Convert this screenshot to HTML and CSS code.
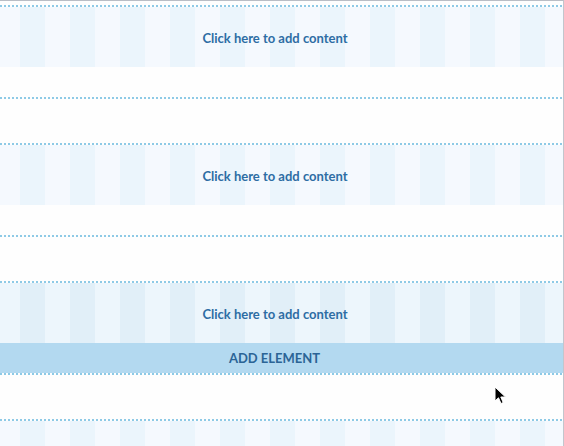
FILE: index.html
```html
<!DOCTYPE html>
<html>
<head>
<meta charset="utf-8">
<link rel="stylesheet" href="styles.css">
</head>
<body>
<div class="page">
  <div class="lead"></div>
  <div class="element">
    <div class="content"><span class="label">Click here to add content</span></div>
    <div class="foot"></div>
  </div>
  <div class="spacer"></div>
  <div class="element">
    <div class="content"><span class="label">Click here to add content</span></div>
    <div class="foot"></div>
  </div>
  <div class="spacer"></div>
  <div class="element hover">
    <div class="content"><span class="label">Click here to add content</span></div>
    <div class="foot add">ADD ELEMENT</div>
  </div>
  <div class="spacer"></div>
  <div class="element">
    <div class="content"></div>
  </div>
  <svg class="cursor" width="13" height="20" viewBox="0 0 13 20">
    <path d="M1 1 L1 15 L4.5 11.8 L7 17.5 L9.2 16.5 L6.8 11 L11.5 11 Z" fill="#000" stroke="#fff" stroke-width="1"/>
  </svg>
</div>
</body>
</html>
```
FILE: styles.css
```css
html, body {
  margin: 0;
  padding: 0;
  background: #fefefe;
}
.page {
  position: relative;
  width: 563px;
  height: 445px;
  overflow: hidden;
  border-top: 1px solid #b9bdc5;
  border-right: 1px solid #c2c6cd;
  font-family: Lato, "Open Sans", sans-serif;
  background: #fefefe;
}
.lead {
  height: 4px;
}
.element, .spacer {
  padding-top: 2px;
  background-image: linear-gradient(to right, #8ecae6 50%, transparent 50%);
  background-size: 4px 2px;
  background-repeat: repeat-x;
  background-position: 0 0;
}
.spacer {
  height: 44px;
}
.content {
  height: 60px;
  box-sizing: border-box;
  padding: 2px 13px 0 0;
  display: flex;
  align-items: center;
  justify-content: center;
  background: repeating-linear-gradient(to right, #f5f9fe 0, #f5f9fe 20px, #ebf5fc 20px, #ebf5fc 45px, #f5f9fe 45px, #f5f9fe 50px);
}
.hover .content {
  background: repeating-linear-gradient(to right, #edf6fc 0, #edf6fc 20px, #e1eff8 20px, #e1eff8 45px, #edf6fc 45px, #edf6fc 50px);
}
.label {
  font-size: 13px;
  font-weight: 700;
  color: #2e6da4;
}
.foot {
  height: 30px;
  background: #fefefe;
}
.foot.add {
  box-sizing: border-box;
  padding-right: 14px;
  background: #b3d9f0;
  color: #2b6496;
  font-size: 13px;
  font-weight: 700;
  display: flex;
  align-items: center;
  justify-content: center;
}
.cursor {
  position: absolute;
  left: 494px;
  top: 385px;
}
```
